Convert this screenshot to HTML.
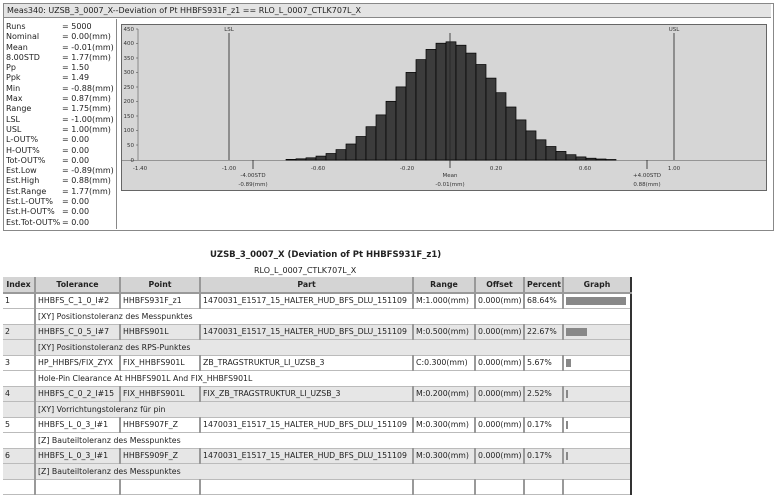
<!DOCTYPE html>
<html><head><meta charset="utf-8"><style>
body{margin:0;width:776px;height:482px;background:#fff;position:relative;overflow:hidden;font-family:"DejaVu Sans","Liberation Sans",sans-serif;color:#222}
.abs{position:absolute}
#outer{left:3px;top:3px;width:769px;height:226px;border:1px solid #888;background:#fff}
#title{left:4px;top:4px;width:767px;height:14px;background:#e4e4e4;border-bottom:1px solid #888;font-size:8px;line-height:14px;padding-left:3px;box-sizing:border-box}
#stats{left:4px;top:19px;width:113px;height:210px;border-right:1px solid #888;font-size:8px;line-height:10.3px;padding-top:3px;box-sizing:border-box}
#stats div{height:10.3px;position:relative;padding-left:2px}
#stats span{position:absolute;left:58px}
table{position:absolute;left:3px;top:277px;border-collapse:collapse;font-size:7.8px;width:629px;border-right:2px solid #333;table-layout:fixed}
td,th{height:14.5px;padding:0 2px;border-left:2px solid #999;border-bottom:1px solid #bbb;white-space:nowrap;text-align:left;overflow:hidden}
td[colspan]{overflow:visible}
th{background:#d4d4d4;font-weight:bold;text-align:center;border-bottom:2px solid #999}
tr.g td{background:#e6e6e6}
.bar{display:inline-block;height:8px;background:#888;vertical-align:middle}
</style></head><body>
<div id="outer" class="abs"></div>
<div id="title" class="abs">Meas340: UZSB_3_0007_X--Deviation of Pt HHBFS931F_z1 == RLO_L_0007_CTLK707L_X</div>
<div id="stats" class="abs">
<div>Runs<span>= 5000</span></div><div>Nominal<span>= 0.00(mm)</span></div><div>Mean<span>= -0.01(mm)</span></div><div>8.00STD<span>= 1.77(mm)</span></div><div>Pp<span>= 1.50</span></div><div>Ppk<span>= 1.49</span></div><div>Min<span>= -0.88(mm)</span></div><div>Max<span>= 0.87(mm)</span></div><div>Range<span>= 1.75(mm)</span></div><div>LSL<span>= -1.00(mm)</span></div><div>USL<span>= 1.00(mm)</span></div><div>L-OUT%<span>= 0.00</span></div><div>H-OUT%<span>= 0.00</span></div><div>Tot-OUT%<span>= 0.00</span></div><div>Est.Low<span>= -0.89(mm)</span></div><div>Est.High<span>= 0.88(mm)</span></div><div>Est.Range<span>= 1.77(mm)</span></div><div>Est.L-OUT%<span>= 0.00</span></div><div>Est.H-OUT%<span>= 0.00</span></div><div>Est.Tot-OUT%<span>= 0.00</span></div>
</div>
<svg class="abs" style="left:0;top:0" width="776" height="232" font-family="DejaVu Sans,sans-serif" font-size="6" fill="#333">
<rect x="121.5" y="24.5" width="645" height="166" fill="#d6d6d6" stroke="#666"/>
<g stroke="#555" stroke-width="0.6">
<line x1="138" y1="29" x2="138" y2="160"/>
<line x1="136" y1="29" x2="138" y2="29"/><line x1="136" y1="43.5" x2="138" y2="43.5"/><line x1="136" y1="58" x2="138" y2="58"/><line x1="136" y1="72.5" x2="138" y2="72.5"/><line x1="136" y1="87" x2="138" y2="87"/><line x1="136" y1="101.5" x2="138" y2="101.5"/><line x1="136" y1="116" x2="138" y2="116"/><line x1="136" y1="130.5" x2="138" y2="130.5"/><line x1="136" y1="145" x2="138" y2="145"/>
<line x1="122" y1="160.5" x2="766" y2="160.5"/>
</g>
<g font-size="5.5" text-anchor="end"><text x="134" y="31">450</text><text x="134" y="45">400</text><text x="134" y="60">350</text><text x="134" y="74">300</text><text x="134" y="89">250</text><text x="134" y="103">200</text><text x="134" y="118">150</text><text x="134" y="132">100</text><text x="134" y="147">50</text><text x="134" y="162">0</text></g>
<g fill="#3c3c3c" stroke="#000" stroke-width="0.7">
<rect x="286" y="159.4" width="10" height="0.6"/><rect x="296" y="158.8" width="10" height="1.2"/><rect x="306" y="157.8" width="10" height="2.2"/><rect x="316" y="156.1" width="10" height="3.9"/><rect x="326" y="153.5" width="10" height="6.5"/><rect x="336" y="149.6" width="10" height="10.4"/><rect x="346" y="144" width="10" height="16"/><rect x="356" y="136.5" width="10" height="23.5"/><rect x="366" y="126.7" width="10" height="33.3"/><rect x="376" y="114.9" width="10" height="45.1"/><rect x="386" y="101.3" width="10" height="58.7"/><rect x="396" y="86.9" width="10" height="73.1"/><rect x="406" y="72.4" width="10" height="87.6"/><rect x="416" y="59.6" width="10" height="100.4"/><rect x="426" y="49.4" width="10" height="110.6"/><rect x="436" y="43.2" width="10" height="116.8"/><rect x="446" y="41.8" width="10" height="118.2"/><rect x="456" y="45.2" width="10" height="114.8"/><rect x="466" y="53.1" width="10" height="106.9"/><rect x="476" y="64.5" width="10" height="95.5"/><rect x="486" y="78.1" width="10" height="81.9"/><rect x="496" y="92.7" width="10" height="67.3"/><rect x="506" y="107" width="10" height="53"/><rect x="516" y="119.9" width="10" height="40.1"/><rect x="526" y="130.9" width="10" height="29.1"/><rect x="536" y="139.8" width="10" height="20.2"/><rect x="546" y="146.5" width="10" height="13.5"/><rect x="556" y="151.4" width="10" height="8.6"/><rect x="566" y="154.7" width="10" height="5.3"/><rect x="576" y="156.9" width="10" height="3.1"/><rect x="586" y="158.2" width="10" height="1.8"/><rect x="596" y="159" width="10" height="1"/><rect x="606" y="159.5" width="10" height="0.5"/>
</g>
<g stroke="#222" stroke-width="0.8">
<line x1="229" y1="33" x2="229" y2="160"/><line x1="674" y1="33" x2="674" y2="160"/><line x1="450" y1="33" x2="450" y2="168"/><line x1="253" y1="160" x2="253" y2="169"/><line x1="647" y1="160" x2="647" y2="169"/>
</g>
<g font-size="5.5" text-anchor="middle">
<text x="229" y="31">LSL</text><text x="674" y="31">USL</text>
<text x="140" y="170">-1.40</text><text x="229" y="170">-1.00</text><text x="318" y="170">-0.60</text><text x="407" y="170">-0.20</text><text x="496" y="170">0.20</text><text x="585" y="170">0.60</text><text x="674" y="170">1.00</text>
<text x="253" y="177">-4.00STD</text><text x="253" y="186">-0.89(mm)</text>
<text x="450" y="177">Mean</text><text x="450" y="186">-0.01(mm)</text>
<text x="647" y="177">+4.00STD</text><text x="647" y="186">0.88(mm)</text>
</g>
</svg>
<div class="abs" style="left:210px;top:250px;font-size:8.5px;font-weight:bold">UZSB_3_0007_X (Deviation of Pt HHBFS931F_z1)</div>
<div class="abs" style="left:254px;top:266px;font-size:8px">RLO_L_0007_CTLK707L_X</div>
<table>
<colgroup><col style="width:32px"><col style="width:85px"><col style="width:80px"><col style="width:213px"><col style="width:62px"><col style="width:49px"><col style="width:39px"><col style="width:68px"></colgroup>
<tr><th style="border-left:none">Index</th><th>Tolerance</th><th>Point</th><th>Part</th><th>Range</th><th>Offset</th><th>Percent</th><th>Graph</th></tr>
<tr><td style="border-left:none">1</td><td>HHBFS_C_1_0_I#2</td><td>HHBFS931F_z1</td><td>1470031_E1517_15_HALTER_HUD_BFS_DLU_151109</td><td>M:1.000(mm)</td><td>0.000(mm)</td><td>68.64%</td><td><span class="bar" style="width:60px"></span></td></tr>
<tr><td style="border-left:none"></td><td colspan="7">[XY] Positionstoleranz des Messpunktes</td></tr>
<tr class="g"><td style="border-left:none">2</td><td>HHBFS_C_0_5_I#7</td><td>HHBFS901L</td><td>1470031_E1517_15_HALTER_HUD_BFS_DLU_151109</td><td>M:0.500(mm)</td><td>0.000(mm)</td><td>22.67%</td><td><span class="bar" style="width:21px"></span></td></tr>
<tr class="g"><td style="border-left:none"></td><td colspan="7">[XY] Positionstoleranz des RPS-Punktes</td></tr>
<tr><td style="border-left:none">3</td><td>HP_HHBFS/FIX_ZYX</td><td>FIX_HHBFS901L</td><td>ZB_TRAGSTRUKTUR_LI_UZSB_3</td><td>C:0.300(mm)</td><td>0.000(mm)</td><td>5.67%</td><td><span class="bar" style="width:5px"></span></td></tr>
<tr><td style="border-left:none"></td><td colspan="7">Hole-Pin Clearance At HHBFS901L And FIX_HHBFS901L</td></tr>
<tr class="g"><td style="border-left:none">4</td><td>HHBFS_C_0_2_I#15</td><td>FIX_HHBFS901L</td><td>FIX_ZB_TRAGSTRUKTUR_LI_UZSB_3</td><td>M:0.200(mm)</td><td>0.000(mm)</td><td>2.52%</td><td><span class="bar" style="width:2px"></span></td></tr>
<tr class="g"><td style="border-left:none"></td><td colspan="7">[XY] Vorrichtungstoleranz für pin</td></tr>
<tr><td style="border-left:none">5</td><td>HHBFS_L_0_3_I#1</td><td>HHBFS907F_Z</td><td>1470031_E1517_15_HALTER_HUD_BFS_DLU_151109</td><td>M:0.300(mm)</td><td>0.000(mm)</td><td>0.17%</td><td><span class="bar" style="width:2px"></span></td></tr>
<tr><td style="border-left:none"></td><td colspan="7">[Z] Bauteiltoleranz des Messpunktes</td></tr>
<tr class="g"><td style="border-left:none">6</td><td>HHBFS_L_0_3_I#1</td><td>HHBFS909F_Z</td><td>1470031_E1517_15_HALTER_HUD_BFS_DLU_151109</td><td>M:0.300(mm)</td><td>0.000(mm)</td><td>0.17%</td><td><span class="bar" style="width:2px"></span></td></tr>
<tr class="g"><td style="border-left:none"></td><td colspan="7">[Z] Bauteiltoleranz des Messpunktes</td></tr>
<tr><td style="border-left:none">&nbsp;</td><td></td><td></td><td></td><td></td><td></td><td></td><td></td></tr>
</table>
</body></html>
